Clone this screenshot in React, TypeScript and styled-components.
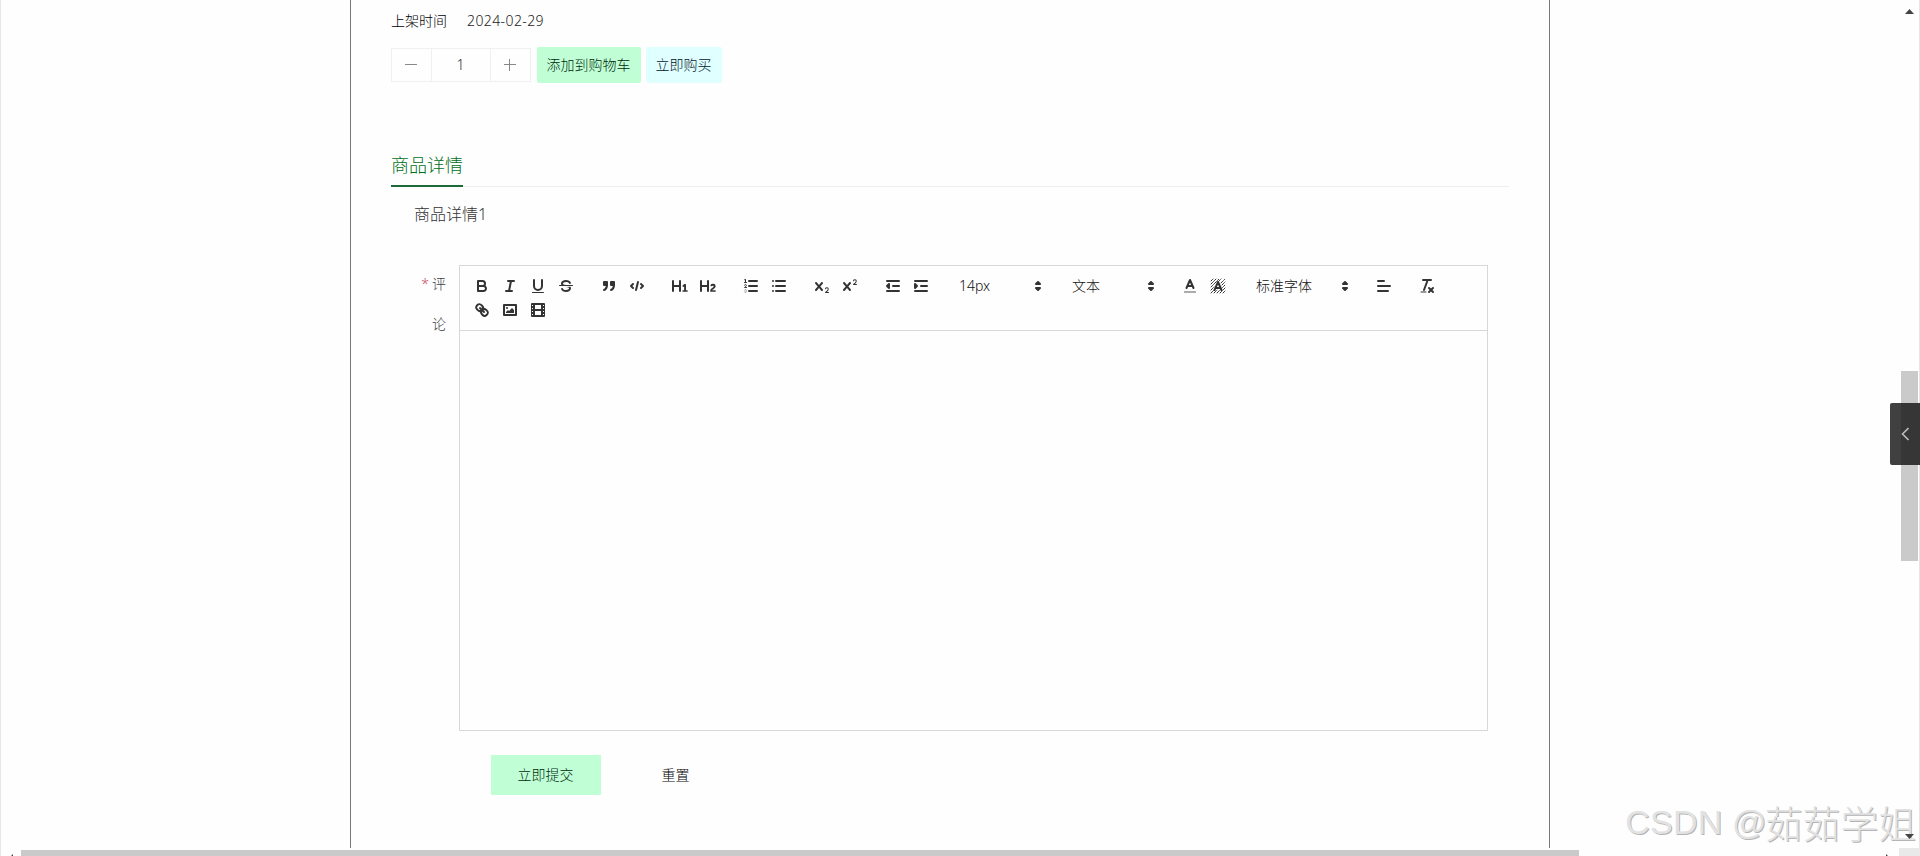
import React from "react";
import styled, { createGlobalStyle } from "styled-components";

const GlobalStyle = createGlobalStyle`
  *, *::before, *::after { box-sizing: border-box; }
  body {
    margin: 0;
    background: #fefefe;
    color: #222;
    font: 300 14px/1.4 "Noto Sans", "Noto Sans CJK SC", sans-serif;
    overflow: hidden;
  }
`;

const Viewport = styled.div`
  position: relative;
  height: 856px;
  border-left: 1px solid #e8e8e8;
  border-right: 1px solid #e5e5e5;
`;

const Page = styled.main`
  width: 1200px;
  height: 848px;
  margin-left: 349px;
  padding: 6px 40px 0;
  border: solid #777;
  border-width: 0 1px;
`;

const InfoRow = styled.div`
  display: flex;
  gap: 20px;
  height: 30px;
  line-height: 30px;
`;

const InfoLabel = styled.span`
  color: #000;
`;

const InfoValue = styled.span`
  letter-spacing: 0.4px;
  color: #222;
`;

const BuyRow = styled.div`
  display: flex;
  align-items: center;
  height: 36px;
  margin-top: 11px;
`;

const Stepper = styled.div`
  display: grid;
  grid-template-columns: 40px 1fr 40px;
  width: 140px;
  height: 34px;
  margin-right: 6px;
  border: 1px solid #f0f0f0;
`;

const StepCell = styled.div<{ $side?: "left" | "right" }>`
  display: flex;
  align-items: center;
  justify-content: center;
  padding-right: 1px;
  color: #333;
  border: 0 solid #f0f0f0;
  border-right-width: ${(p) => (p.$side === "left" ? 1 : 0)}px;
  border-left-width: ${(p) => (p.$side === "right" ? 1 : 0)}px;
`;

const ShopButton = styled.button<{ $width: number; $bg: string; $color: string }>`
  width: ${(p) => p.$width}px;
  height: 36px;
  margin-right: 5px;
  padding: 0 1px 0 0;
  border: 0;
  border-radius: 2px;
  background: ${(p) => p.$bg};
  color: ${(p) => p.$color};
  font: inherit;
`;

const TabBar = styled.div`
  display: flex;
  height: 40px;
  margin-top: 64px;
  box-shadow: inset 0 -1px 0 #eceef0;
`;

const Tab = styled.div`
  height: 40px;
  border-bottom: 2px solid #1c6b36;
  color: #007020;
  font-size: 18px;
  line-height: 37px;
`;

const Detail = styled.div`
  height: 78px;
  padding: 11px 23px 0;
  color: #333;
  font-size: 16px;
  line-height: 32px;
`;

const FormRow = styled.div`
  display: flex;
  padding-left: 20px;
`;

const FormLabel = styled.div`
  width: 48px;
  height: 80px;
  margin-top: -1px;
  padding-right: 13px;
  color: #404145;
  line-height: 40px;
  text-align: right;
`;

const Star = styled.span`
  margin-right: 3px;
  color: #c84a68;
`;

const Editor = styled.div`
  width: 1029px;
`;

const Toolbar = styled.div`
  display: flex;
  flex-wrap: wrap;
  height: 66px;
  padding: 8px;
  border: 1px solid #d8d8d8;
`;

const Group = styled.div`
  display: flex;
  height: 24px;
  margin-right: 15px;
`;

const Tool = styled.span`
  display: block;
  width: 28px;
  height: 24px;
  padding: 3px 5px;
`;

const Picker = styled.span<{ $width: number }>`
  display: flex;
  align-items: center;
  justify-content: space-between;
  width: ${(p) => p.$width}px;
  height: 24px;
  padding: 0 1px 0 9px;
  color: #111;
`;

const EditArea = styled.div`
  height: 400px;
  border: 1px solid #d8d8d8;
  border-top: 0;
`;

const Actions = styled.div`
  display: flex;
  gap: 20px;
  margin-top: 24px;
  padding-left: 100px;
`;

const ActionButton = styled.button<{ $primary?: boolean }>`
  width: 110px;
  height: 40px;
  padding: 0 1px 0 0;
  border: 0;
  background: ${(p) => (p.$primary ? "#c0ffd6" : "transparent")};
  color: ${(p) => (p.$primary ? "#002a0c" : "#000")};
  font: inherit;
`;

const Icon = styled.svg`
  display: block;
  width: 18px;
  height: 18px;
  fill: none;
  stroke: #333;
  stroke-width: 2;
  stroke-linecap: round;
  stroke-linejoin: round;

  .fill { fill: #333; }
  .solid { fill: #333; stroke: none; }
  .thin { stroke-width: 1; }
  .pale { opacity: 0.4; }
`;

const VerticalThumb = styled.div`
  position: absolute;
  top: 371px;
  right: 1px;
  width: 17px;
  height: 190px;
  background: #cacaca;
`;

const HorizontalThumb = styled.div`
  position: absolute;
  left: 20px;
  bottom: 0;
  width: 1558px;
  height: 6px;
  background: #cacaca;
`;

const Corner = styled.div`
  position: absolute;
  right: -1px;
  bottom: 0;
  width: 21px;
  height: 8px;
  background: #e9e9e9;
`;

const Drawer = styled.div`
  position: absolute;
  top: 403px;
  right: -1px;
  display: flex;
  align-items: center;
  justify-content: center;
  width: 30px;
  height: 62px;
  border-radius: 2px 0 0 2px;
  background: linear-gradient(90deg, #404040 11px, #363636 11px);
`;

const Arrow = styled.svg<{ $x: number; $y: number }>`
  position: absolute;
  left: ${(p) => p.$x}px;
  top: ${(p) => p.$y}px;
  fill: #444;
`;

const Watermark = styled.div`
  position: absolute;
  right: 3px;
  bottom: 9px;
  display: flex;
  align-items: center;
  color: #e2e2e2;
  font: 300 37.8px/50px "Noto Sans CJK SC", sans-serif;
  text-shadow: 1px 1px 0 #b4b4b4;
  white-space: pre;
`;

const WatermarkLatin = styled.span`
  margin-right: -2px;
  font: 400 34px/50px "Liberation Sans", sans-serif;
  letter-spacing: 0.2px;
`;

const icons: Record<string, React.ReactNode> = {
  bold: (
    <>
      <path d="M5,4H9.5A2.5,2.5,0,0,1,12,6.5v0A2.5,2.5,0,0,1,9.5,9H5V4Z" />
      <path d="M5,9h5.5A2.5,2.5,0,0,1,13,11.5v0A2.5,2.5,0,0,1,10.5,14H5V9Z" />
    </>
  ),
  italic: <path d="M7,4H13M5,14H11M8,14L10,4" />,
  underline: (
    <>
      <path d="M5,3V9a4.012,4.012,0,0,0,4,4H9a4.012,4.012,0,0,0,4-4V3" />
      <rect className="solid" x="3" y="15" width="12" height="1" rx=".5" />
    </>
  ),
  strike: (
    <>
      <path className="thin" d="M15.5,8.5H2.5" />
      <path className="solid" d="M9.007,8C6.542,7.791,6,7.519,6,6.5,6,5.792,7.283,5,9,5c1.571,0,2.765.679,2.969,1.309a1,1,0,0,0,1.9-.617C13.356,4.106,11.354,3,9,3,6.2,3,4,4.538,4,6.5a3.2,3.2,0,0,0,.5,1.843Z" />
      <path className="solid" d="M8.984,10C11.457,10.208,12,10.479,12,11.5c0,.708-1.283,1.5-3,1.5-1.571,0-2.765-.679-2.969-1.309a1,1,0,1,0-1.9.617C4.644,13.894,6.646,15,9,15c2.8,0,5-1.538,5-3.5a3.2,3.2,0,0,0-.5-1.843Z" />
    </>
  ),
  quote: (
    <>
      <rect className="fill" x="4" y="5" width="3" height="3" />
      <rect className="fill" x="11" y="5" width="3" height="3" />
      <path className="fill" d="M7,8c0,4.031-3,5-3,5M14,8c0,4.031-3,5-3,5" />
    </>
  ),
  code: <path d="M5,7L3,9L5,11M13,7L15,9L13,11M10,5L8,13" />,
  h1: (
    <path className="solid" d="M10,4V14a1,1,0,0,1-2,0V10H3v4a1,1,0,0,1-2,0V4A1,1,0,0,1,3,4V8H8V4a1,1,0,0,1,2,0Zm6.06787,9.209H14.98975V7.59863a.54085.54085,0,0,0-.605-.60547h-.62744a1.01119,1.01119,0,0,0-.748.29688L11.645,8.56641a.5435.5435,0,0,0-.022.8584l.28613.30762a.53861.53861,0,0,0,.84717.0332l.09912-.08789a1.2137,1.2137,0,0,0,.2417-.35254h.02246s-.01123.30859-.01123.60547V13.209H12.041a.54085.54085,0,0,0-.605.60547v.43945a.54085.54085,0,0,0,.605.60547h4.02686a.54085.54085,0,0,0,.605-.60547v-.43945A.54085.54085,0,0,0,16.06787,13.209Z" />
  ),
  h2: (
    <path className="solid" d="M16.73975,13.81445v.43945a.54085.54085,0,0,1-.605.60547H11.855a.58392.58392,0,0,1-.64893-.60547V14.0127c0-2.90527,3.39941-3.42187,3.39941-4.55469a.77675.77675,0,0,0-.84717-.78125,1.17684,1.17684,0,0,0-.83594.38477c-.2749.26367-.561.374-.85791.13184l-.4292-.34082c-.30811-.24219-.38525-.51758-.1543-.81445a2.97155,2.97155,0,0,1,2.45361-1.17676,2.45393,2.45393,0,0,1,2.68408,2.40918c0,2.45312-3.1792,2.92676-3.27832,3.93848h2.79443A.54085.54085,0,0,1,16.73975,13.81445ZM9,3A.99974.99974,0,0,0,8,4V8H3V4A1,1,0,0,0,1,4V14a1,1,0,0,0,2,0V10H8v4a1,1,0,0,0,2,0V4A.99974.99974,0,0,0,9,3Z" />
  ),
  ordered: (
    <>
      <path d="M7,4H15M7,9H15M7,14H15" />
      <path className="thin" d="M2.5,5.5H4.5" />
      <path className="solid" d="M3.5,6A0.5,0.5,0,0,1,3,5.5V3.085l-0.276.138A0.5,0.5,0,0,1,2.053,3c-0.124-.247-0.023-0.324.224-0.447l1-.5A0.5,0.5,0,0,1,4,2.5v3A0.5,0.5,0,0,1,3.5,6Z" />
      <path className="thin" d="M4.5,10.5h-2c0-.234,1.85-1.076,1.85-2.234A0.959,0.959,0,0,0,2.5,8.156" />
      <path className="thin pale" d="M2.5,14.846a0.959,0.959,0,0,0,1.85-.109A0.7,0.7,0,0,0,3.75,14a0.688,0.688,0,0,0,.6-0.736,0.959,0.959,0,0,0-1.85-.109" />
    </>
  ),
  bullet: (
    <>
      <path d="M6,4H15M6,9H15M6,14H15" />
      <path d="M3,4h0M3,9h0M3,14h0" />
    </>
  ),
  sub: (
    <>
      <path className="solid" d="M15.5,15H13.861a3.858,3.858,0,0,0,1.914-2.975,1.8,1.8,0,0,0-1.6-1.751A1.921,1.921,0,0,0,12.021,11.7a0.50013,0.50013,0,1,0,.957.291h0a0.914,0.914,0,0,1,1.053-.725,0.81,0.81,0,0,1,.744.762c0,1.076-1.16971,1.86982-1.93971,2.43082A1.45639,1.45639,0,0,0,12,15.5a0.5,0.5,0,0,0,.5.5h3A0.5,0.5,0,0,0,15.5,15Z" />
      <path className="solid" d="M9.65,5.241a1,1,0,0,0-1.409.108L6,7.964,3.759,5.349A1,1,0,0,0,2.192,6.59178Q2.21541,6.6213,2.241,6.649L4.684,9.5,2.241,12.35A1,1,0,0,0,3.71,13.70722q0.02557-.02768.049-0.05722L6,11.036,8.241,13.65a1,1,0,1,0,1.567-1.24277Q9.78459,12.3777,9.759,12.35L7.316,9.5,9.759,6.651A1,1,0,0,0,9.65,5.241Z" />
    </>
  ),
  sup: (
    <>
      <path className="solid" d="M15.5,7H13.861a4.015,4.015,0,0,0,1.914-2.975,1.8,1.8,0,0,0-1.6-1.751A1.922,1.922,0,0,0,12.021,3.7a0.5,0.5,0,1,0,.957.291,0.917,0.917,0,0,1,1.053-.725,0.81,0.81,0,0,1,.744.762c0,1.077-1.164,1.925-1.934,2.486A1.423,1.423,0,0,0,12,7.5a0.5,0.5,0,0,0,.5.5h3A0.5,0.5,0,0,0,15.5,7Z" />
      <path className="solid" d="M9.651,5.241a1,1,0,0,0-1.41.108L6,7.964,3.759,5.349a1,1,0,1,0-1.519,1.3L4.683,9.5,2.241,12.35a1,1,0,1,0,1.519,1.3L6,11.036,8.241,13.65a1,1,0,0,0,1.519-1.3L7.317,9.5,9.759,6.651A1,1,0,0,0,9.651,5.241Z" />
    </>
  ),
  outdent: <><path d="M3,14H15M3,4H15M9,9H15" /><path className="fill" d="M5,7V11L3,9Z" /></>,
  indent: <><path d="M3,14H15M3,4H15M9,9H15" /><path className="fill" d="M3,7V11L5,9Z" /></>,
  picker: <><path className="fill" d="M7,11L9,13L11,11Z" /><path className="fill" d="M7,7L9,5L11,7Z" /></>,
  color: (
    <>
      <path className="pale" strokeLinecap="butt" d="M3,15H15" />
      <path d="M5.5,11L9,3L12.5,11M11.63,9H6.38" />
    </>
  ),
  background: (
    <>
      <path className="thin" strokeDasharray="1 1" d="M2,4L4,2M2,7L7,2M2,10L10,2M2,13L5,10M9,5L12,2M2,16L6,12M12,6L16,2M5,16L8,13M13,8L16,5M8,16L16,8M11,16L16,11M14,16L16,14" />
      <path d="M5.5,13L9,5L12.5,13M11.63,11H6.38" />
    </>
  ),
  align: <path d="M3,9H15M3,14H13M3,4H9" />,
  clean: (
    <>
      <path className="thin" d="M3,15H8" />
      <path d="M5,3H13M6,13L9.35,4M11,11L15,15M15,11L11,15" />
    </>
  ),
  link: (
    <>
      <path d="M7,7L11,11" />
      <path d="M8.9,4.577a3.476,3.476,0,0,1,.36,4.679A3.476,3.476,0,0,1,4.577,8.9C3.185,7.5,2.035,6.4,4.217,4.217S7.5,3.185,8.9,4.577Z" />
      <path d="M13.423,9.1a3.476,3.476,0,0,0-4.679-.36,3.476,3.476,0,0,0,.36,4.679c1.392,1.392,2.5,2.542,4.679.36S14.815,10.5,13.423,9.1Z" />
    </>
  ),
  image: (
    <>
      <rect x="3" y="4" width="12" height="10" />
      <circle className="solid" cx="6" cy="7" r="1" />
      <path className="solid" d="M5,12V11L7,9L8,10L11,7L13,9V12Z" />
    </>
  ),
  video: (
    <>
      <path className="solid" fillRule="evenodd" d="M3,2H15A1,1,0,0,1,16,3V15A1,1,0,0,1,15,16H3A1,1,0,0,1,2,15V3A1,1,0,0,1,3,2ZM6,4V8H12V4ZM6,10V14H12V10ZM3,4V5H4V4ZM3,7V8H4V7ZM3,10V11H4V10ZM3,13V14H4V13ZM14,4V5H15V4ZM14,7V8H15V7ZM14,10V11H15V10ZM14,13V14H15V13Z" />
    </>
  ),
};

const Glyph = ({ name }: { name: string }) => <Icon viewBox="0 0 18 18">{icons[name]}</Icon>;

const ToolGroup = ({ names }: { names: string[] }) => (
  <Group>
    {names.map((name) => (
      <Tool key={name}>
        <Glyph name={name} />
      </Tool>
    ))}
  </Group>
);

const PickerGroup = ({ label, width }: { label: string; width: number }) => (
  <Group>
    <Picker $width={width}>
      {label}
      <Glyph name="picker" />
    </Picker>
  </Group>
);

export default function App() {
  return (
    <>
      <GlobalStyle />
      <Viewport>
        <Page>
          <InfoRow>
            <InfoLabel>上架时间</InfoLabel>
            <InfoValue>2024-02-29</InfoValue>
          </InfoRow>
          <BuyRow>
            <Stepper>
              <StepCell $side="left">
                <svg width="12" height="12" stroke="#888"><path d="M0 5.5H12" /></svg>
              </StepCell>
              <StepCell>1</StepCell>
              <StepCell $side="right">
                <svg width="12" height="12" stroke="#888"><path d="M0 5.5H12M5.5 0V12" /></svg>
              </StepCell>
            </Stepper>
            <ShopButton $width={104} $bg="#c0ffd6" $color="#002a0c">添加到购物车</ShopButton>
            <ShopButton $width={76} $bg="#e0ffff" $color="#00142c">立即购买</ShopButton>
          </BuyRow>
          <TabBar>
            <Tab>商品详情</Tab>
          </TabBar>
          <Detail>商品详情1</Detail>
          <FormRow>
            <FormLabel>
              <Star>*</Star>评<br />论
            </FormLabel>
            <Editor>
              <Toolbar>
                <ToolGroup names={["bold", "italic", "underline", "strike"]} />
                <ToolGroup names={["quote", "code"]} />
                <ToolGroup names={["h1", "h2"]} />
                <ToolGroup names={["ordered", "bullet"]} />
                <ToolGroup names={["sub", "sup"]} />
                <ToolGroup names={["outdent", "indent"]} />
                <PickerGroup label="14px" width={98} />
                <PickerGroup label="文本" width={98} />
                <ToolGroup names={["color", "background"]} />
                <PickerGroup label="标准字体" width={108} />
                <ToolGroup names={["align"]} />
                <ToolGroup names={["clean"]} />
                <ToolGroup names={["link", "image", "video"]} />
              </Toolbar>
              <EditArea />
            </Editor>
          </FormRow>
          <Actions>
            <ActionButton $primary>立即提交</ActionButton>
            <ActionButton>重置</ActionButton>
          </Actions>
        </Page>
        <VerticalThumb />
        <HorizontalThumb />
        <Corner />
        <Drawer>
          <svg width="8" height="14" fill="none" stroke="#bbb" strokeWidth="1.6"><path d="M7.5 1L1.5 7L7.5 13" /></svg>
        </Drawer>
        <Arrow $x={1904} $y={9} width="9" height="5"><path d="M0 5L4.5 0L9 5Z" /></Arrow>
        <Arrow $x={10} $y={854} width="3" height="2"><path d="M0 2L2 0V2Z" /></Arrow>
        <Arrow $x={1885} $y={854} width="3" height="2"><path d="M0 0L2 2H0Z" /></Arrow>
        <Watermark>
          <WatermarkLatin>CSDN @</WatermarkLatin>茹茹学姐
        </Watermark>
        <Arrow $x={1904} $y={834} width="9" height="5"><path d="M0 0H9L4.5 5Z" /></Arrow>
      </Viewport>
    </>
  );
}
